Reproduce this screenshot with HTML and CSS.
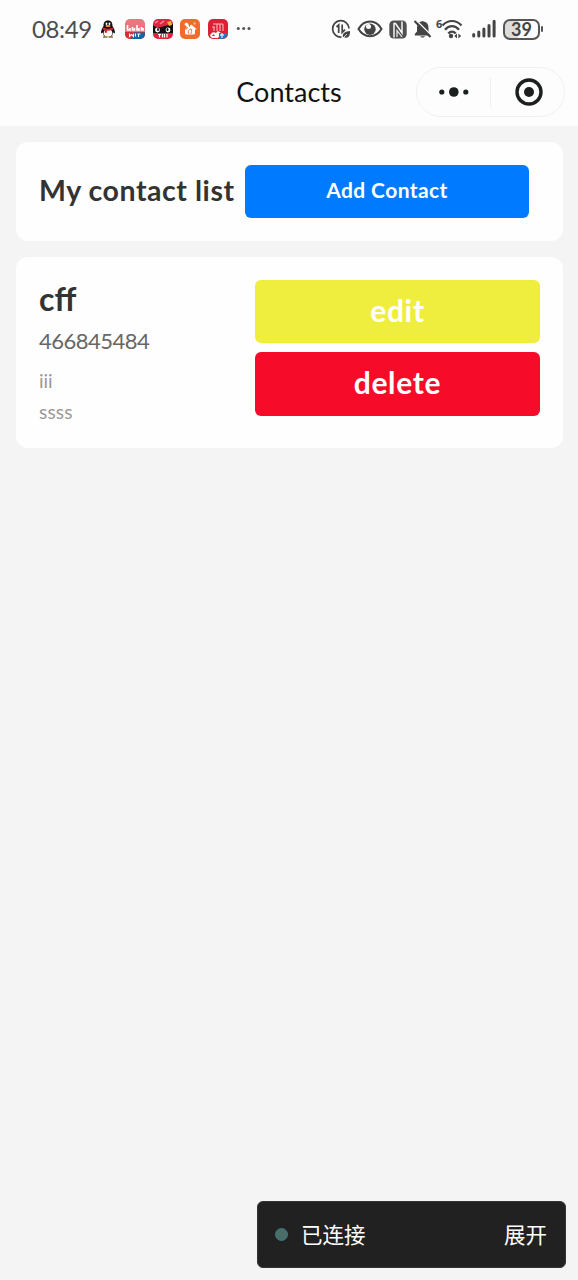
FILE: index.html
```html
<!DOCTYPE html>
<html lang="en">
<head>
<meta charset="utf-8">
<title>Contacts</title>
<link rel="stylesheet" href="styles.css">
</head>
<body>
<div class="screen">
  <header class="top">
    <div class="status">
      <div class="status-left">
        <span class="clock">08:49</span>
        <svg class="penguin" width="16" height="20" viewBox="0 0 16 20">
          <path d="M3.500 7C3.500 3 5.200 1.500 8 1.500s4.500 1.500 4.500 5.500c1.500 2.500 3 5 2.300 7.500L13 13.500 12 17.500H4L3 13.500 1.200 14.500C.5 12 2 9.500 3.500 7z" fill="#111"/>
          <ellipse cx="8" cy="14" rx="4.300" ry="3.800" fill="#fff"/>
          <ellipse cx="6.500" cy="4.700" rx=".9" ry="1.200" fill="#fff"/><ellipse cx="9.500" cy="4.700" rx=".9" ry="1.200" fill="#fff"/>
          <ellipse cx="8" cy="7" rx="2.600" ry=".9" fill="#f5a524"/>
          <path d="M3.200 8.500c3 1.500 6.600 1.500 9.600 0l.4 2c-2 .8-4.200 1.200-6.200 1.200v2H4.800v-2.500L2.700 10.500z" fill="#d92231"/>
          <path d="M3 17.500h4.500v1.300H3zM8.500 17.500H13v1.300H8.500z" fill="#a8601c"/>
        </svg>
        <svg class="app" width="20" height="20" viewBox="0 0 20 20">
          <rect width="20" height="20" rx="5" fill="#ee7580"/>
          <path d="M0 13h20v2a5 5 0 0 1-5 5H5a5 5 0 0 1-5-5z" fill="#d92b3a"/>
          <path d="M9 13.500h11V15a5 5 0 0 1-5 5H7z" fill="#17669f"/>
          <path d="M2.500 6v5h2.500V9M7.500 8v3h2V9M12 6v5h2V9M16.500 8v3h1.500V9" stroke="#fff" stroke-width="1.600" fill="none"/>
          <path d="M4.500 14.500v3l2-2 2 2v-3M10.500 14.500v3M12.500 15h3M13.500 15v3" stroke="#fff" stroke-width="1.100" fill="none"/>
        </svg>
        <svg class="app" width="20" height="20" viewBox="0 0 20 20">
          <rect width="20" height="20" rx="5" fill="#dd2440"/>
          <path d="M0 6.500l3 1.500h5L12 7l8-2v9H0z" fill="#111"/>
          <path d="M2 4l3-2M7 5l4-3" stroke="#f3949d" stroke-width="1.500"/><path d="M14 3l4-1 1 4-3 1z" fill="#efb13b"/>
          <circle cx="4.500" cy="11" r="2.400" fill="#fff"/><circle cx="15" cy="11" r="2.400" fill="#fff"/>
          <ellipse cx="5" cy="10.500" rx="1" ry="1.600" fill="#111"/><ellipse cx="14.500" cy="10.500" rx="1" ry="1.600" fill="#111"/>
          <path d="M5 15.500h3M6.500 15.500v3M9.500 15v3.500M11.500 15v3.500M14 15v3.500" stroke="#fff" stroke-width="1.200"/>
        </svg>
        <svg class="app" width="20" height="20" viewBox="0 0 20 20">
          <rect width="20" height="20" rx="5" fill="#f26a2c"/>
          <path d="M4.500 5.500c.3-2.500 3.300-2.500 4 0l.7 2.500 2-2.500 5.300 4.500-1.500.7V14a1.500 1.500 0 0 1-1.500 1.500H6.500A1.500 1.500 0 0 1 5 14v-3.500L7 8z" fill="#fff"/>
          <path d="M8.500 14.500c-1-2.500.5-4 2.500-4.500 1 2 .7 3.500-.5 5M5.500 10.500l2.500-2" stroke="#f26a2c" stroke-width="1" fill="none"/>
          <circle cx="14.500" cy="4.500" r="1.200" fill="#ffb28a"/>
        </svg>
        <svg class="app" width="20" height="20" viewBox="0 0 20 20">
          <rect width="20" height="20" rx="5" fill="#dd2036"/>
          <path d="M5 5h10M6 8v4M9 5v7M12 5v7M15 5v7M4 8h3" stroke="#f7b8bd" stroke-width="1.100" fill="none"/>
          <path d="M2 17c1-4 4-4.500 6-3l2-2 3 2-3 5H4z" fill="#fff"/><path d="M4 17l1.500-2 1.500 2z" fill="#d92535"/>
          <path d="M11 14h8v1a5 5 0 0 1-5 5h-3z" fill="#2476b8"/><path d="M12 16h4M14 14v5" stroke="#fff"/>
        </svg>
        <svg class="more" width="16" height="20" viewBox="0 0 16 20" fill="#555"><circle cx="2.300" cy="9.500" r="1.500"/><circle cx="7.700" cy="9.500" r="1.500"/><circle cx="13" cy="9.500" r="1.500"/></svg>
      </div>
      <div class="status-right">
        <svg width="20" height="20" viewBox="0 0 20 20" fill="none" stroke="#444" stroke-width="1.700">
          <path d="M18 9.500A8.200 8.200 0 1 0 10.500 18"/><path d="M5.500 8l2.200-2V14M11.200 5.500v8l2.800-2.800"/>
          <path d="M12 18c-1-4 2.500-5.500 7-6 .3 5-2 7.500-5 6.500z" fill="#444" stroke="none"/><path d="M12 19l4-4" stroke="#fff" stroke-width=".8"/>
        </svg>
        <svg class="eye" width="26" height="20" viewBox="0 0 26 20">
          <path d="M1.500 10C7 0 19 0 24.500 10 19 19.500 7 19.500 1.500 10z" fill="none" stroke="#444" stroke-width="2"/>
          <circle cx="13" cy="10.300" r="5.700" fill="#444"/><circle cx="11.500" cy="7.600" r="2.500" fill="#fdfdfd"/>
        </svg>
        <svg class="nfc" width="18" height="19" viewBox="0 0 18 19">
          <rect x=".3" y=".5" width="17.400" height="18" rx="4.500" fill="#505050"/>
          <path d="M5 17.500V3.500h1.500L13 13V1.500" fill="none" stroke="#fff" stroke-width="1.400"/>
          <path d="M8 17V10.500l5 6.500" fill="none" stroke="#fff" stroke-width="1.100"/>
        </svg>
        <svg class="bell" width="19" height="20" viewBox="0 0 19 20">
          <path d="M4 8.500C4 5 6 3 8.500 2.600a1.200 1.200 0 0 1 2.200 0C14 3.200 15.500 5.500 15.500 9v3.500l2 2.500v1.500H1.800V15L4 12.500z" fill="#444"/>
          <path d="M7 17.300h5.200q-2.600 2.700-5.200 0z" fill="#444"/>
          <path d="M3 1L19 17" stroke="#fdfdfd" stroke-width="1.500"/><path d="M1.500 2l16 16" stroke="#444" stroke-width="2.200"/>
        </svg>
        <div class="wifi">
          <span class="wifi-gen">6</span>
          <svg width="22" height="20" viewBox="0 0 22 20" fill="none" stroke="#444" stroke-width="2.200">
            <path d="M1.500 6.500C7 .5 15 .5 20.500 6.500M4 10.700c4-4.700 10-4.700 14 0M7.300 14.500c2.200-2.600 5.200-2.600 7.400 0"/>
            <circle cx="10" cy="17" r="2.200" fill="#444" stroke="none"/><path d="M16 14.500v5l-2.700-2.500zM17.400 14.500v5l2.700-2.500z" fill="#444" stroke="none"/>
          </svg>
        </div>
        <svg class="signal" width="24" height="20" viewBox="0 0 24 20" stroke="#444" stroke-width="3" stroke-linecap="round"><path d="M1.700 15.500v1.500M6.800 13v4M11.900 10v7M17 6.500V17M22.100 2.300V17"/></svg>
        <div class="battery"><span>39</span></div>
        <div class="battery-tip"></div>
      </div>
    </div>
    <div class="nav">
      <h1 class="title">Contacts</h1>
      <div class="capsule">
        <svg class="dots" width="30" height="12" viewBox="0 0 30 12" fill="#1b1f1e"><circle cx="2.800" cy="6" r="2.600"/><circle cx="14.800" cy="6" r="4.800"/><circle cx="26.800" cy="6" r="2.600"/></svg>
        <span class="rule"></span>
        <svg class="target" width="28" height="28" viewBox="0 0 28 28"><circle cx="14" cy="14" r="12" fill="none" stroke="#1b1f1e" stroke-width="3.400"/><circle cx="14" cy="14" r="5" fill="#1b1f1e"/></svg>
      </div>
    </div>
  </header>
  <main class="content">
    <section class="card heading">
      <h2 class="list-title">My contact list</h2>
      <button class="btn add"><span>Add Contact</span></button>
    </section>
    <section class="card contact">
      <div class="info">
        <div class="name">cff</div>
        <div class="phone">466845484</div>
        <div class="detail">iii</div>
        <div class="detail detail-last">ssss</div>
      </div>
      <div class="actions">
        <button class="btn edit"><span>edit</span></button>
        <button class="btn delete"><span>delete</span></button>
      </div>
    </section>
  </main>
  <footer class="toast">
    <span class="dot"></span>
    <span class="state">已连接</span>
    <span class="expand">展开</span>
  </footer>
</div>
</body>
</html>
```
FILE: styles.css
```css
* { box-sizing: border-box; }
body { margin: 0; background: #f4f4f4; font-family: Lato, "Noto Sans CJK SC", sans-serif; }
h1, h2 { margin: 0; }
svg { display: block; flex: none; }
.screen { display: flex; flex-direction: column; height: 1280px; }

.top { height: 126px; background: #fdfdfd; }
.status { display: flex; justify-content: space-between; height: 58px; padding: 0 35px 0 32px; align-items: center; }
.status-left, .status-right { display: flex; align-items: center; }
.clock { width: 60px; font-size: 24px; line-height: 28px; color: #4c4c4c; white-space: nowrap; letter-spacing: -0.4px; }
.penguin { margin-left: 7.500px; }
.app { margin-left: 7.700px; }
.penguin + .app { margin-left: 9.500px; }
.more { margin-left: 8px; }
.eye { margin-left: 6px; }
.nfc { margin-left: 6px; }
.bell { margin-left: 6px; }
.wifi { display: flex; margin-left: 4px; }
.wifi-gen { width: 5px; margin-top: -1px; font-family: "Noto Sans", sans-serif; font-size: 11px; line-height: 11px; font-weight: 700; color: #444; }
.signal { margin-left: 9px; }
.battery { width: 37px; height: 21px; margin-left: 7px; border: 2px solid #555; border-radius: 7px; background: linear-gradient(90deg, #dcdcdc 38%, #fdfdfd 38%); display: flex; justify-content: center; align-items: center; font-size: 18px; line-height: 18px; font-weight: 700; color: #444; }
.battery-tip { width: 2px; height: 6px; margin-left: 1px; border-radius: 1px; background: #555; }

.nav { display: grid; grid-template-columns: 1fr auto 1fr; align-items: center; height: 68px; padding-right: 13px; padding-left: 13px; }
.title { grid-column: 2; font-size: 27px; line-height: 32px; font-weight: 400; color: #111; }
.capsule { justify-self: end; display: flex; align-items: center; width: 149px; height: 50px; padding-left: 22px; border: 1px solid #f1f1f1; border-radius: 25px; }
.rule { width: 1px; height: 29px; margin-left: 21px; background: #f0f0f0; }
.target { margin-left: 24px; }

.content { padding: 16px 15px 0 16px; }
.card { display: flex; background: #fefefe; border-radius: 12px; }
.heading { height: 99px; padding-left: 23px; align-items: center; }
.list-title { width: 206px; padding-bottom: 3px; font-size: 28.500px; line-height: 34px; font-weight: 700; letter-spacing: 0.55px; color: #333; white-space: nowrap; }
.btn { display: flex; justify-content: center; align-items: center; padding: 0 0 4px; border: 0; border-radius: 6px; color: #fff; font-family: inherit; font-weight: 700; }
.add { width: 284px; height: 53px; background: #007aff; font-size: 21px; letter-spacing: 0.4px; }
.contact { height: 191px; margin-top: 16px; padding: 23px 23px 0 23px; justify-content: space-between; }
.name { margin-top: -1px; font-size: 32px; line-height: 40px; font-weight: 700; color: #333; }
.phone { margin-top: 7px; font-size: 22px; line-height: 30px; letter-spacing: -0.5px; color: #666; }
.detail { margin-top: 11px; font-size: 19px; line-height: 28px; color: #999; }
.detail-last { margin-top: 3px; letter-spacing: 0.2px; }
.actions { display: flex; flex-direction: column; gap: 9px; }
.edit, .delete { width: 285px; height: 63px; font-size: 30px; letter-spacing: 0.7px; }
.edit { background: #efee3f; }
.delete { height: 64px; background: #f60b29; }

.toast { display: flex; align-items: center; align-self: flex-end; width: 309px; height: 67px; margin: auto 12px 12px 0; padding: 0 18px 2px 17px; border: 1px solid #343434; border-radius: 6px; background: #212121; color: #fff; font-family: "Noto Sans CJK SC", sans-serif; font-size: 21.500px; line-height: 30px; }
.dot { width: 13px; height: 13px; margin-top: 1px; border: 1px solid #397887; border-radius: 50%; background: #4b6d65; }
.state { margin-left: 13px; }
.expand { margin-left: auto; }
```
